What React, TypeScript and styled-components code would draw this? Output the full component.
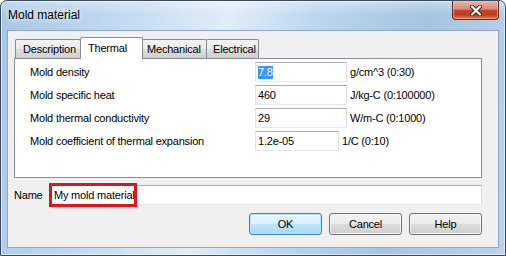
import React from 'react'
import styled, { createGlobalStyle } from 'styled-components'

const GlobalStyle = createGlobalStyle`
  html, body {
    margin: 0;
    padding: 0;
    background: #ffffff;
  }
  body {
    font-family: "Liberation Sans", Arial, sans-serif;
    font-size: 11px;
    letter-spacing: -0.2px;
    color: #000;
  }
`

const Window = styled.div`
  width: 506px;
  height: 256px;
  box-sizing: border-box;
  border: 1px solid #3b4a5c;
  border-radius: 7px 7px 0 0;
  background:
    linear-gradient(180deg, rgba(255, 255, 255, 0.35) 0px, rgba(255, 255, 255, 0) 14px),
    linear-gradient(100deg, #a8c6e5 0%, #c3d9ef 22%, #e0edf9 42%, #bed6ee 58%, #a6c3e2 78%, #bcd3eb 100%);
  box-shadow: inset 0 0 0 1px rgba(255, 255, 255, 0.55);
  display: flex;
  flex-direction: column;
  padding: 0 6px 7px 6px;
`

const TitleBar = styled.div`
  height: 29px;
  display: flex;
  align-items: flex-start;
  justify-content: space-between;
`

const Title = styled.div`
  font-size: 12px;
  letter-spacing: 0;
  line-height: 29px;
  padding-left: 1px;
  color: #000;
  text-shadow: 0 0 6px rgba(255, 255, 255, 0.95), 0 0 10px rgba(255, 255, 255, 0.8);
`

const CloseButton = styled.div`
  width: 47px;
  height: 19px;
  box-sizing: border-box;
  border: 1px solid #5a2b21;
  border-top: none;
  border-radius: 0 0 4px 4px;
  background: linear-gradient(180deg, #eab2a4 0%, #dc8a76 45%, #c6472d 52%, #c03c22 75%, #e07a52 100%);
  box-shadow: inset 0 0 0 1px rgba(255, 220, 200, 0.45);
  display: flex;
  align-items: center;
  justify-content: center;
`

const Client = styled.div`
  flex: 1;
  border: 1px solid #8ea6bf;
  background: #f0f0f0;
  padding: 6px 16px 0 6px;
  display: flex;
  flex-direction: column;
`

const TabStrip = styled.div`
  height: 21px;
  display: flex;
  align-items: flex-end;
  padding-left: 1px;
  position: relative;
  z-index: 1;
`

const Tab = styled.div<{ $w: number; $indent: number; $active?: boolean }>`
  width: ${p => p.$w}px;
  height: ${p => (p.$active ? 22 : 19)}px;
  margin-bottom: ${p => (p.$active ? -1 : 0)}px;
  box-sizing: border-box;
  margin-left: -1px;
  &:first-child {
    margin-left: 0;
  }
  border: 1px solid #898c95;
  border-bottom: none;
  border-radius: 2px 2px 0 0;
  padding-left: ${p => p.$indent}px;
  display: flex;
  align-items: center;
  background: ${p =>
    p.$active ? '#ffffff' : 'linear-gradient(180deg, #f2f2f2 0%, #ebebeb 50%, #dddddd 51%, #cfcfcf 100%)'};
  position: relative;
  z-index: ${p => (p.$active ? 2 : 1)};
  padding-bottom: ${p => (p.$active ? 2 : 0)}px;
`

const Panel = styled.div`
  height: 120px;
  box-sizing: border-box;
  border: 1px solid #898c95;
  background: #ffffff;
  padding: 3px 0 0 15px;
  display: flex;
  flex-direction: column;
  gap: 3px;
`

const FieldRow = styled.div`
  display: flex;
  align-items: center;
  height: 20px;
`

const FieldLabel = styled.div`
  width: 225px;
`

const TextBox = styled.div<{ $w?: number }>`
  ${p => (p.$w ? `width: ${p.$w}px;` : 'flex: 1;')}
  height: 20px;
  box-sizing: border-box;
  border: 1px solid;
  border-color: #abadb3 #dbdfe6 #e3e9ef #e2e3ea;
  background: #ffffff;
  padding-left: 2px;
  display: flex;
  align-items: center;
  position: relative;
`

const Selected = styled.span`
  background: #3399ff;
  color: #ffffff;
  line-height: 13px;
`

const Unit = styled.div`
  margin-left: 3px;
`

const NameRow = styled.div`
  margin-top: 7px;
  height: 20px;
  display: flex;
  align-items: center;
`

const NameLabel = styled.div`
  width: 37px;
`

const Highlight = styled.div`
  position: absolute;
  left: -3px;
  top: -3px;
  width: 88px;
  height: 24px;
  box-sizing: border-box;
  border: 3px solid #e0161c;
  pointer-events: none;
`

const ButtonRow = styled.div`
  margin-top: 8px;
  display: flex;
  justify-content: flex-end;
  gap: 7px;
`

const Button = styled.div<{ $default?: boolean }>`
  width: 73px;
  height: 22px;
  box-sizing: border-box;
  border: 1px solid ${p => (p.$default ? '#3c7fb1' : '#707070')};
  border-radius: 3px;
  display: flex;
  align-items: center;
  justify-content: center;
  background: ${p =>
    p.$default
      ? 'linear-gradient(180deg, #eaf6fd 0%, #d9f0fc 50%, #bee6fd 51%, #a7d9f5 100%)'
      : 'linear-gradient(180deg, #f2f2f2 0%, #ebebeb 50%, #dddddd 51%, #cfcfcf 100%)'};
  box-shadow: inset 0 0 0 1px ${p => (p.$default ? 'rgba(180, 230, 255, 0.9)' : 'rgba(255, 255, 255, 0.7)')};
`

const fields = [
  { label: 'Mold density', value: '7.8', unit: 'g/cm^3 (0:30)', w: 92, selected: true },
  { label: 'Mold specific heat', value: '460', unit: 'J/kg-C (0:100000)', w: 92 },
  { label: 'Mold thermal conductivity', value: '29', unit: 'W/m-C (0:1000)', w: 92 },
  { label: 'Mold coefficient of thermal expansion', value: '1.2e-05', unit: '1/C (0:10)', w: 84 }
]

const tabs = [
  { name: 'Description', w: 66, indent: 7 },
  { name: 'Thermal', w: 63, indent: 7, active: true },
  { name: 'Mechanical', w: 65, indent: 4 },
  { name: 'Electrical', w: 53, indent: 6 }
]

const App = () => (
  <>
    <GlobalStyle />
    <Window>
      <TitleBar>
        <Title>Mold material</Title>
        <CloseButton>
          <svg width="14" height="11" viewBox="0 0 14 11">
            <path d="M3 1.5 L11 9.5 M11 1.5 L3 9.5" stroke="#4a1c12" strokeWidth="4" strokeLinecap="round" />
            <path d="M3 1.5 L11 9.5 M11 1.5 L3 9.5" stroke="#ffffff" strokeWidth="2.2" strokeLinecap="round" />
          </svg>
        </CloseButton>
      </TitleBar>
      <Client>
        <TabStrip>
          {tabs.map(t => (
            <Tab key={t.name} $w={t.w} $indent={t.indent} $active={t.active}>
              {t.name}
            </Tab>
          ))}
        </TabStrip>
        <Panel>
          {fields.map(f => (
            <FieldRow key={f.label}>
              <FieldLabel>{f.label}</FieldLabel>
              <TextBox $w={f.w}>{f.selected ? <Selected>{f.value}</Selected> : f.value}</TextBox>
              <Unit>{f.unit}</Unit>
            </FieldRow>
          ))}
        </Panel>
        <NameRow>
          <NameLabel>Name</NameLabel>
          <TextBox>
            My mold material
            <Highlight />
          </TextBox>
        </NameRow>
        <ButtonRow>
          <Button $default>OK</Button>
          <Button>Cancel</Button>
          <Button>Help</Button>
        </ButtonRow>
      </Client>
    </Window>
  </>
)

export default App
